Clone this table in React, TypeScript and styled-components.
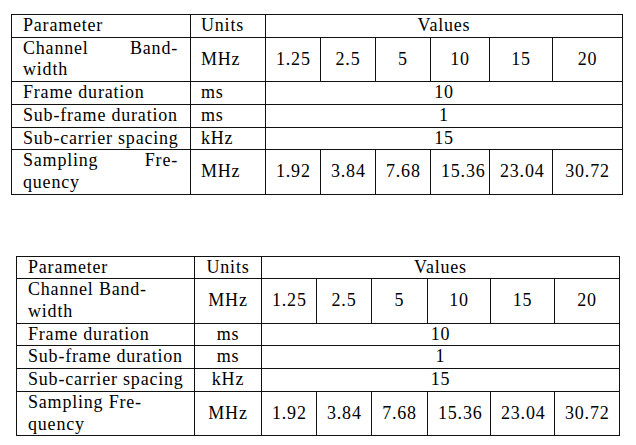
import styled, { createGlobalStyle } from "styled-components";

const GlobalStyle = createGlobalStyle`
  html, body {
    margin: 0;
    padding: 0;
    background: #fff;
  }
  body {
    font-family: "Liberation Serif", "DejaVu Serif", serif;
    color: #000;
  }
`;

type Variant = "justified" | "ragged";

interface Row {
  label: string[];
  unit: string;
  values: string[];
}

const rows: Row[] = [
  { label: ["Channel Band-", "width"], unit: "MHz", values: ["1.25", "2.5", "5", "10", "15", "20"] },
  { label: ["Frame duration"], unit: "ms", values: ["10"] },
  { label: ["Sub-frame duration"], unit: "ms", values: ["1"] },
  { label: ["Sub-carrier spacing"], unit: "kHz", values: ["15"] },
  { label: ["Sampling Fre-", "quency"], unit: "MHz", values: ["1.92", "3.84", "7.68", "15.36", "23.04", "30.72"] },
];

const Page = styled.div`
  display: flex;
  flex-direction: column;
  gap: 61px;
  padding-top: 14px;
`;

const Sheet = styled.table<{ $left: number; $width: number }>`
  margin-left: ${({ $left }) => $left}px;
  width: ${({ $width }) => $width}px;
  border-collapse: collapse;
  table-layout: fixed;
  font-family: "Liberation Serif", "DejaVu Serif", serif;
  font-size: 18px;
  letter-spacing: 0.8px;
  color: #000;
`;

const Col = styled.col<{ $w: number }>`
  width: ${({ $w }) => $w}px;
`;

const Cell = styled.td<{ $align?: "left" | "center" }>`
  border: 1px solid #111;
  padding: 0 10px;
  height: 21px;
  line-height: 21.7px;
  vertical-align: middle;
  text-align: ${({ $align }) => $align ?? "center"};
  white-space: nowrap;
`;

const LabelCell = styled(Cell)`
  padding: 0 12px 0 11px;
`;

const SpreadLine = styled.div`
  display: flex;
  justify-content: space-between;
`;

const Line = styled.div``;

const Label = ({ lines, variant }: { lines: string[]; variant: Variant }) => {
  if (lines.length === 1) return <>{lines[0]}</>;
  return (
    <>
      {variant === "justified" ? (
        <SpreadLine>
          {lines[0].split(" ").map((w) => (
            <span key={w}>{w}</span>
          ))}
        </SpreadLine>
      ) : (
        <Line>{lines[0]}</Line>
      )}
      <Line>{lines[1]}</Line>
    </>
  );
};

const ParamTable = ({ left, widths, variant }: { left: number; widths: number[]; variant: Variant }) => {
  const unitAlign = variant === "justified" ? "left" : "center";
  return (
    <Sheet $left={left} $width={widths.reduce((a, b) => a + b, 0)}>
      <colgroup>
        {widths.map((w, i) => (
          <Col key={i} $w={w} />
        ))}
      </colgroup>
      <tbody>
        <tr>
          <LabelCell $align="left">Parameter</LabelCell>
          <Cell $align={unitAlign}>Units</Cell>
          <Cell colSpan={6}>Values</Cell>
        </tr>
        {rows.map((r) => (
          <tr key={r.unit + r.label[0]}>
            <LabelCell $align="left">
              <Label lines={r.label} variant={variant} />
            </LabelCell>
            <Cell $align={unitAlign}>{r.unit}</Cell>
            {r.values.length === 1 ? (
              <Cell colSpan={6}>{r.values[0]}</Cell>
            ) : (
              r.values.map((v) => <Cell key={v}>{v}</Cell>)
            )}
          </tr>
        ))}
      </tbody>
    </Sheet>
  );
};

export default function App() {
  return (
    <>
      <GlobalStyle />
      <Page>
        <ParamTable left={11} widths={[179, 75, 55, 55, 55, 59, 63, 70]} variant="justified" />
        <ParamTable left={16} widths={[178, 67, 55, 55, 56, 63, 64, 65]} variant="ragged" />
      </Page>
    </>
  );
}
